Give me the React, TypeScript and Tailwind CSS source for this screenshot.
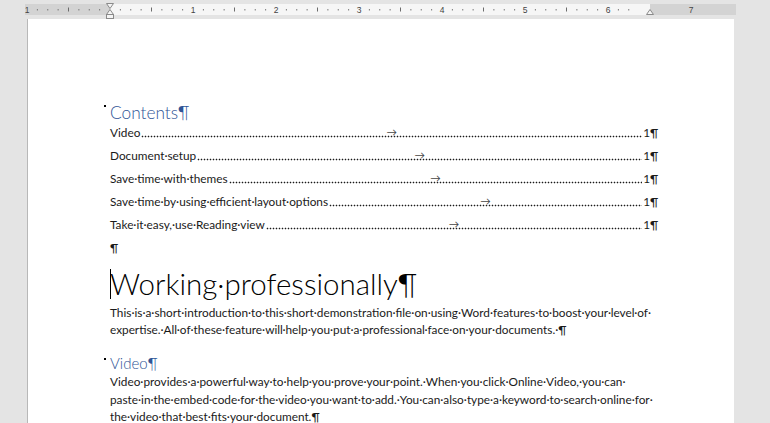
import React from "react";

const INCH = 83;
const ZERO = 110;

function Ruler() {
  const ticks: React.ReactNode[] = [];
  for (let i = -7; i <= 50; i++) {
    const x = ZERO + (i * INCH) / 8;
    if (x < 27 || x > 733) continue;
    if (i % 8 === 0) continue;
    if (i % 4 === 0) {
      ticks.push(<line key={i} x1={x} x2={x} y1={7.5} y2={11.5} stroke="#6b6b6b" strokeWidth={1} />);
    } else {
      ticks.push(<line key={i} x1={x} x2={x} y1={9} y2={10.5} stroke="#7a7a7a" strokeWidth={1} />);
    }
  }
  const nums: React.ReactNode[] = [];
  nums.push(
    <text key="l1" x={ZERO - INCH} y={12.5} fontSize={8.5} textAnchor="middle" fill="#444" fontFamily="Liberation Sans, sans-serif">1</text>
  );
  for (let k = 1; k <= 7; k++) {
    nums.push(
      <text key={k} x={ZERO + k * INCH} y={12.5} fontSize={8.5} textAnchor="middle" fill="#444" fontFamily="Liberation Sans, sans-serif">{k}</text>
    );
  }
  return (
    <svg width={770} height={19} viewBox="0 0 770 19" className="block">
      <rect x={0} y={0} width={770} height={19} fill="#e4e4e4" />
      <rect x={25} y={4} width={711} height={11} fill="#d3d3d3" />
      <rect x={110} y={4} width={540} height={11} fill="#f6f6f6" />
      {ticks}
      {nums}
      <path d="M106.5 3.5 L113.5 3.5 L110 8.5 Z" fill="#f4f4f4" stroke="#8a8a8a" strokeWidth={1} />
      <path d="M110 9.5 L113.5 14.5 L106.5 14.5 Z" fill="#f4f4f4" stroke="#8a8a8a" strokeWidth={1} />
      <rect x={106.5} y={14.5} width={7} height={4} fill="#f4f4f4" stroke="#8a8a8a" strokeWidth={1} />
      <path d="M650 9.5 L653.5 14.5 L646.5 14.5 Z" fill="#f4f4f4" stroke="#8a8a8a" strokeWidth={1} />
    </svg>
  );
}

const toc = [
  "Video ",
  "Document·setup",
  "Save·time·with·themes",
  "Save·time·by·using·efficient·layout·options",
  "Take·it·easy,·use·Reading·view ",
];

function TocRow({ label }: { label: string }) {
  return (
    <div className="flex w-[540px] h-[23px] leading-[17px] whitespace-nowrap">
      <span>{label}</span>
      <span className="relative flex-1 ml-[1px] mr-[1px] bg-[radial-gradient(circle,#1a1a1a_0.7px,transparent_1.1px)] bg-[length:3px_3px] bg-repeat-x bg-[position:0_11px]">
        <span className="absolute left-1/2 top-0 -translate-x-1/2 text-[10.5px] text-[#444]">→</span>
      </span>
      <span>1</span>
      <span className="w-0 overflow-visible">¶</span>
    </div>
  );
}

export default function App() {
  return (
    <div className="w-[770px] h-[423px] overflow-hidden bg-[#e4e4e4] relative">
      <Ruler />
      <div className="ml-[27px] w-[707px] h-[500px] bg-white border-l border-[#b8b8b8] pl-[82px] pt-[83px] text-[11.8px] text-[#1a1a1a] font-['Lato',sans-serif]">
        <div className="relative text-[17.3px] leading-[22px] text-[#2f5496] font-light">
          <span className="absolute left-[-6px] top-[3px] w-[2px] h-[2px] bg-black" />
          Contents¶
        </div>
        {toc.map((t) => (
          <TocRow key={t} label={t} />
        ))}
        <div className="leading-[17px]">¶</div>
        <div className="relative mt-[8px] text-[29.5px] leading-[40px] font-light text-black whitespace-nowrap">
          <span className="absolute left-0 top-[5px] w-px h-[30px] bg-black" />
          Working·professionally¶
        </div>
        <div className="leading-[17px] whitespace-nowrap">
          <div>This·is·a·short·introduction·to·this·short·demonstration·file·on·using·Word·features·to·boost·your·level·of·</div>
          <div>expertise.·All·of·these·feature·will·help·you·put·a·professional·face·on·your·documents.·¶</div>
        </div>
        <div className="relative mt-[15px] text-[15px] leading-[20px] text-[#2f5496] font-light whitespace-nowrap">
          <span className="absolute left-[-6px] top-[5px] w-[2px] h-[2px] bg-black" />
          Video¶
        </div>
        <div className="leading-[17.5px] whitespace-nowrap">
          <div>Video·provides·a·powerful·way·to·help·you·prove·your·point.·When·you·click·Online·Video,·you·can·</div>
          <div>paste·in·the·embed·code·for·the·video·you·want·to·add.·You·can·also·type·a·keyword·to·search·online·for·</div>
          <div>the·video·that·best·fits·your·document.¶</div>
        </div>
      </div>
    </div>
  );
}
